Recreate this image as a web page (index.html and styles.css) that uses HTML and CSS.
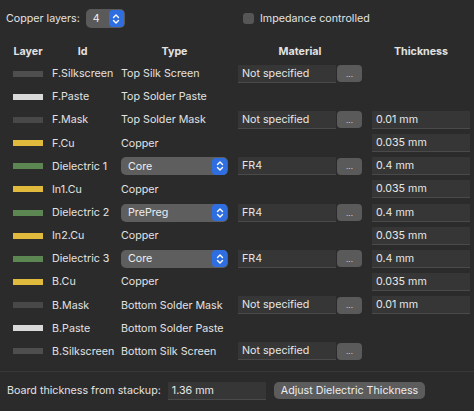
FILE: index.html
```html
<!DOCTYPE html>
<html lang="en">
<head>
    <meta charset="UTF-8">
    <meta name="viewport" content="width=device-width, initial-scale=1.0">
    <title>Board Stackup</title>
    <link rel="stylesheet" href="styles.css">
</head>
<body>
    <div class="top-bar">
        <div class="copper-count">
            <span>Copper layers:</span>
            <div class="spinner">
                <span class="spinner-value">4</span>
                <span class="spinner-btn">
                    <svg width="8" height="12" viewBox="0 0 8 12"><path d="M1.5 4.5 L4 2 L6.5 4.5 M1.5 7.5 L4 10 L6.5 7.5" fill="none" stroke="#fff" stroke-width="1.4" stroke-linecap="round" stroke-linejoin="round"/></svg>
                </span>
            </div>
        </div>
        <label class="impedance"><span class="checkbox"></span>Impedance controlled</label>
    </div>

    <div class="stackup">
        <div class="head head-layer">Layer</div>
        <div class="head head-id">Id</div>
        <div class="head head-type">Type</div>
        <div class="head head-material">Material</div>
        <div class="head head-thick">Thickness</div>

        <div class="cell"><span class="swatch silk"></span></div>
        <div class="cell">F.Silkscreen</div>
        <div class="cell">Top Silk Screen</div>
        <div class="cell mat"><span class="field">Not specified</span><span class="dots">...</span></div>
        <div class="cell"></div>

        <div class="cell"><span class="swatch paste"></span></div>
        <div class="cell">F.Paste</div>
        <div class="cell">Top Solder Paste</div>
        <div class="cell"></div>
        <div class="cell"></div>

        <div class="cell"><span class="swatch mask"></span></div>
        <div class="cell">F.Mask</div>
        <div class="cell">Top Solder Mask</div>
        <div class="cell mat"><span class="field">Not specified</span><span class="dots">...</span></div>
        <div class="cell"><span class="field thick">0.01 mm</span></div>

        <div class="cell"><span class="swatch copper"></span></div>
        <div class="cell">F.Cu</div>
        <div class="cell">Copper</div>
        <div class="cell"></div>
        <div class="cell"><span class="field thick">0.035 mm</span></div>

        <div class="cell"><span class="swatch diel"></span></div>
        <div class="cell">Dielectric 1</div>
        <div class="cell"><span class="combo">Core<span class="combo-btn"><svg width="8" height="12" viewBox="0 0 8 12"><path d="M1.5 4.5 L4 2 L6.5 4.5 M1.5 7.5 L4 10 L6.5 7.5" fill="none" stroke="#fff" stroke-width="1.4" stroke-linecap="round" stroke-linejoin="round"/></svg></span></span></div>
        <div class="cell mat"><span class="field">FR4</span><span class="dots">...</span></div>
        <div class="cell"><span class="field thick">0.4 mm</span></div>

        <div class="cell"><span class="swatch copper"></span></div>
        <div class="cell">In1.Cu</div>
        <div class="cell">Copper</div>
        <div class="cell"></div>
        <div class="cell"><span class="field thick">0.035 mm</span></div>

        <div class="cell"><span class="swatch diel"></span></div>
        <div class="cell">Dielectric 2</div>
        <div class="cell"><span class="combo">PrePreg<span class="combo-btn"><svg width="8" height="12" viewBox="0 0 8 12"><path d="M1.5 4.5 L4 2 L6.5 4.5 M1.5 7.5 L4 10 L6.5 7.5" fill="none" stroke="#fff" stroke-width="1.4" stroke-linecap="round" stroke-linejoin="round"/></svg></span></span></div>
        <div class="cell mat"><span class="field">FR4</span><span class="dots">...</span></div>
        <div class="cell"><span class="field thick">0.4 mm</span></div>

        <div class="cell"><span class="swatch copper"></span></div>
        <div class="cell">In2.Cu</div>
        <div class="cell">Copper</div>
        <div class="cell"></div>
        <div class="cell"><span class="field thick">0.035 mm</span></div>

        <div class="cell"><span class="swatch diel"></span></div>
        <div class="cell">Dielectric 3</div>
        <div class="cell"><span class="combo">Core<span class="combo-btn"><svg width="8" height="12" viewBox="0 0 8 12"><path d="M1.5 4.5 L4 2 L6.5 4.5 M1.5 7.5 L4 10 L6.5 7.5" fill="none" stroke="#fff" stroke-width="1.4" stroke-linecap="round" stroke-linejoin="round"/></svg></span></span></div>
        <div class="cell mat"><span class="field">FR4</span><span class="dots">...</span></div>
        <div class="cell"><span class="field thick">0.4 mm</span></div>

        <div class="cell"><span class="swatch copper"></span></div>
        <div class="cell">B.Cu</div>
        <div class="cell">Copper</div>
        <div class="cell"></div>
        <div class="cell"><span class="field thick">0.035 mm</span></div>

        <div class="cell"><span class="swatch mask"></span></div>
        <div class="cell">B.Mask</div>
        <div class="cell">Bottom Solder Mask</div>
        <div class="cell mat"><span class="field">Not specified</span><span class="dots">...</span></div>
        <div class="cell"><span class="field thick">0.01 mm</span></div>

        <div class="cell"><span class="swatch paste"></span></div>
        <div class="cell">B.Paste</div>
        <div class="cell">Bottom Solder Paste</div>
        <div class="cell"></div>
        <div class="cell"></div>

        <div class="cell"><span class="swatch silk"></span></div>
        <div class="cell">B.Silkscreen</div>
        <div class="cell">Bottom Silk Screen</div>
        <div class="cell mat"><span class="field">Not specified</span><span class="dots">...</span></div>
        <div class="cell"></div>
    </div>

    <div class="bottom-bar">
        <span>Board thickness from stackup:</span>
        <span class="field total">1.36 mm</span>
        <span class="adjust">Adjust Dielectric Thickness</span>
    </div>
</body>
</html>
```

FILE: styles.css
```css
html,body{
    margin:0;
    height:100%;
    width:100%;
    background-color:#2b2b2b;
    color:#e2e2e2;
    font-family:Inter, "Noto Sans", sans-serif;
    font-size:10.7px;
}
.top-bar{
    height:37px;
    display:flex;
    align-items:center;
    padding-left:6px;
}
.copper-count{
    display:flex;
    align-items:center;
    width:237px;
}
.spinner{
    margin-left:6px;
    width:39px;
    height:19px;
    border-radius:5px;
    background-color:#5a5a5a;
    display:flex;
    align-items:center;
    justify-content:space-between;
}
.spinner-value{
    margin-left:7px;
    color:#f0f0f0;
}
.spinner-btn, .combo-btn{
    width:15px;
    height:17px;
    margin-right:1px;
    border-radius:4px;
    background-color:#2f6ee0;
    display:flex;
    align-items:center;
    justify-content:center;
}
.impedance{
    display:flex;
    align-items:center;
}
.checkbox{
    width:11px;
    height:11px;
    border-radius:3px;
    background-color:#565656;
    margin-right:6px;
}
.stackup{
    display:grid;
    grid-template-columns:39px 69px 117px 134px 98px;
    grid-template-rows:22px;
    grid-auto-rows:23.17px;
    padding-left:13px;
    padding-bottom:8px;
    margin-top:3px;
}
.head{
    font-weight:700;
    display:flex;
    align-items:center;
    justify-content:center;
}
.head-layer{
    width:30px;
}
.head-id{
    padding-right:8px;
}
.head-type{
    padding-right:10px;
}
.head-material{
    grid-column:4;
    padding-right:10px;
}
.cell{
    display:flex;
    align-items:center;
}
.swatch{
    width:30px;
    height:6px;
}
.silk{
    background-color:#4e4e4e;
}
.paste{
    background-color:#d9d9d9;
}
.mask{
    background-color:#484848;
}
.copper{
    background-color:#dfba3c;
}
.diel{
    background-color:#5c8753;
}
.field{
    box-sizing:border-box;
    height:18px;
    width:98px;
    padding-left:4px;
    display:flex;
    align-items:center;
    background-color:#363636;
    border-bottom:1px solid #4a4a4a;
    color:#e6e6e6;
}
.thick{
    width:98px;
}
.dots{
    width:25px;
    height:17px;
    border-radius:4px;
    background-color:#5a5a5a;
    margin-left:1px;
    display:flex;
    align-items:center;
    justify-content:center;
    font-size:8px;
    color:#dcdcdc;
    line-height:1;
}
.combo{
    box-sizing:border-box;
    width:107px;
    height:18px;
    border-radius:5px;
    background-color:#5e5e5e;
    padding-left:7px;
    display:flex;
    align-items:center;
    justify-content:space-between;
    color:#eeeeee;
}
.bottom-bar{
    border-top:1px solid #383838;
    height:37px;
    display:flex;
    align-items:center;
    padding-left:7px;
}
.total{
    margin-left:7px;
}
.adjust{
    margin-left:8px;
    height:17px;
    padding:0 7px;
    border-radius:5px;
    background-color:#5c5c5c;
    display:flex;
    align-items:center;
    color:#ececec;
}
```
